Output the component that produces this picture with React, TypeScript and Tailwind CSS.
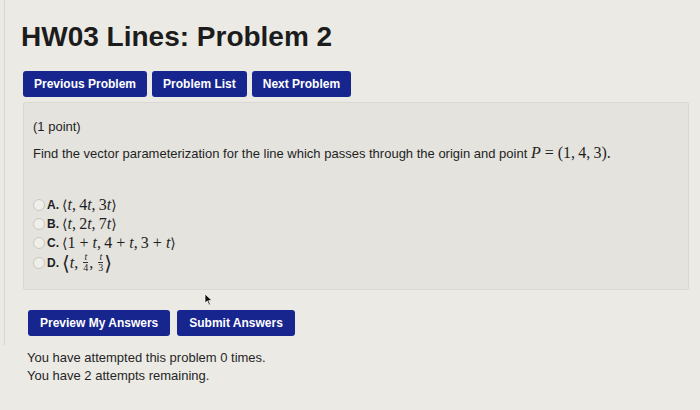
import React from 'react'

// HW03 problem page — WeBWorK-style layout

const navButtons = ['Previous Problem', 'Problem List', 'Next Problem']

function Radio() {
  return <span className="mr-[2px] inline-block h-[12px] w-[12px] shrink-0 rounded-full border border-[#c8c7c1] bg-[#efeee9]" />
}

function M({ children }: { children: React.ReactNode }) {
  return <span className="font-['Liberation_Serif','DejaVu_Serif',serif] text-[16px]">{children}</span>
}

function I({ children }: { children: React.ReactNode }) {
  return <span className="italic">{children}</span>
}

function Ang({ right, big }: { right?: boolean; big?: boolean }) {
  return (
    <span className={`font-['DejaVu_Serif',serif] font-light ${big ? 'text-[20px]' : 'text-[14px]'}`}>
      {right ? '⟩' : '⟨'}
    </span>
  )
}

function Frac({ top, bottom }: { top: string; bottom: string }) {
  return (
    <span className="mx-[1px] inline-flex flex-col items-center align-middle text-[10px] leading-[10px]">
      <span className="border-b border-[#333] px-[1px] italic">{top}</span>
      <span>{bottom}</span>
    </span>
  )
}

export default function App() {
  return (
    <div className="relative flex h-[410px] w-[700px] overflow-hidden bg-[#ebeae5] font-['Liberation_Sans',Arial,sans-serif] text-[#1f1f1f]">
      {/* sidebar edge */}
      <div className="h-[345px] w-[5px] shrink-0 border-r border-[#d7d6d0]" />

      <div className="flex flex-col pl-[18px] pt-[23px]">
        <h1 className="ml-[-2px] text-[28px] font-bold leading-[28px] text-[#1c1c1c]">HW03 Lines: Problem 2</h1>

        <div className="mt-[20px] flex gap-[5px]">
          {navButtons.map((b) => (
            <button
              key={b}
              className="h-[26px] rounded-[3px] bg-[#17258f] px-[11px] text-[12px] font-bold text-white"
            >
              {b}
            </button>
          ))}
        </div>

        <div className="mt-[5px] h-[188px] w-[666px] rounded-[2px] border border-[#d9d8d2] bg-[#e4e3de] pl-[9px] pt-[15px] text-[13px] leading-[18px]">
          <p>(1 point)</p>
          <p className="mt-[8px]">
            Find the vector parameterization for the line which passes through the origin and point{' '}
            <M>
              <I>P</I> = (1,&thinsp;4,&thinsp;3).
            </M>
          </p>

          <div className="mt-[32px] flex flex-col">
            <div className="flex h-[19px] items-center">
              <Radio />
              <span className="mr-[3px] text-[12px] font-bold">A.</span>
              <M>
                <Ang />
                <I>t</I>,&thinsp;4<I>t</I>,&thinsp;3<I>t</I>
                <Ang right />
              </M>
            </div>
            <div className="flex h-[19px] items-center">
              <Radio />
              <span className="mr-[3px] text-[12px] font-bold">B.</span>
              <M>
                <Ang />
                <I>t</I>,&thinsp;2<I>t</I>,&thinsp;7<I>t</I>
                <Ang right />
              </M>
            </div>
            <div className="flex h-[19px] items-center">
              <Radio />
              <span className="mr-[3px] text-[12px] font-bold">C.</span>
              <M>
                <Ang />1 + <I>t</I>,&thinsp;4 + <I>t</I>,&thinsp;3 + <I>t</I>
                <Ang right />
              </M>
            </div>
            <div className="flex h-[22px] items-center">
              <Radio />
              <span className="mr-[3px] text-[12px] font-bold">D.</span>
              <M>
                <span className="inline-flex items-center">
                  <Ang big />
                  <I>t</I>,&nbsp;
                  <Frac top="t" bottom="4" />,&nbsp;
                  <Frac top="t" bottom="3" />
                  <Ang right big />
                </span>
              </M>
            </div>
          </div>
        </div>

        <div className="ml-[5px] mt-[20px] flex gap-[7px]">
          <button className="h-[26px] rounded-[3px] bg-[#17258f] px-[12px] text-[12px] font-bold text-white">
            Preview My Answers
          </button>
          <button className="h-[26px] rounded-[3px] bg-[#17258f] px-[12px] text-[12px] font-bold text-white">
            Submit Answers
          </button>
        </div>

        <div className="ml-[4px] mt-[13px] text-[13px] leading-[18px] text-[#262626]">
          <p>You have attempted this problem 0 times.</p>
          <p>You have 2 attempts remaining.</p>
        </div>
      </div>

      {/* mouse pointer */}
      <svg className="absolute left-[204px] top-[293px]" width="9" height="13" viewBox="0 0 9 13">
        <path d="M1 1 L1 10 L3.3 8 L5 12 L6.4 11.4 L4.7 7.6 L8 7.6 Z" fill="#111" stroke="#fff" strokeWidth="0.7" />
      </svg>
    </div>
  )
}
